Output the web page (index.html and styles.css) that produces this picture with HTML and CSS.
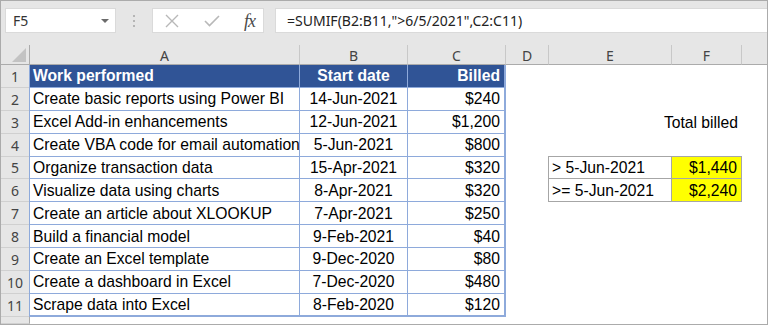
FILE: index.html
```html
<!DOCTYPE html>
<html>
<head>
<meta charset="utf-8">
<link rel="stylesheet" href="styles.css">
</head>
<body>
<div class="app">
  <div class="fbar">
    <div class="namebox">
      <span class="nb-text">F5</span>
      <svg class="nb-arrow" width="8" height="4" viewBox="0 0 8 4"><path d="M0 0 L8 0 L4 4 Z" fill="#6b6b6b"/></svg>
    </div>
    <div class="dots"><i></i><i></i><i></i></div>
    <div class="fxbox">
      <svg class="ic-x" width="14" height="14" viewBox="0 0 14 14"><path d="M1 1 L13 13 M13 1 L1 13" stroke="#b8b8b8" stroke-width="1.4" fill="none"/></svg>
      <svg class="ic-check" width="16" height="12" viewBox="0 0 16 12"><path d="M1 6 L5.5 10.5 L15 1" stroke="#b8b8b8" stroke-width="1.6" fill="none"/></svg>
      <span class="ic-fx">fx</span>
    </div>
    <div class="formula">=SUMIF(B2:B11,"&gt;6/5/2021",C2:C11)</div>
  </div>
  <div class="sheet">
    <div class="corner"><svg width="14" height="14" viewBox="0 0 14 14"><path d="M14 0 L14 14 L0 14 Z" fill="#c3c3c3"/></svg></div>
    <div class="ch">A</div><div class="ch">B</div><div class="ch">C</div><div class="ch">D</div><div class="ch">E</div><div class="ch">F</div><div class="ch last"></div>

    <div class="rh">1</div><div class="c t th l">Work performed</div><div class="c t th m">Start date</div><div class="c t th r tr">Billed</div><div class="c"></div><div class="c"></div><div class="c"></div><div class="c"></div>
    <div class="rh">2</div><div class="c t l">Create basic reports using Power BI</div><div class="c t m">14-Jun-2021</div><div class="c t r tr">$240</div><div class="c"></div><div class="c"></div><div class="c"></div><div class="c"></div>
    <div class="rh">3</div><div class="c t l">Excel Add-in enhancements</div><div class="c t m">12-Jun-2021</div><div class="c t r tr">$1,200</div><div class="c"></div><div class="c"></div><div class="c r over">Total billed</div><div class="c"></div>
    <div class="rh">4</div><div class="c t l">Create VBA code for email automation</div><div class="c t m">5-Jun-2021</div><div class="c t r tr">$800</div><div class="c"></div><div class="c"></div><div class="c"></div><div class="c"></div>
    <div class="rh">5</div><div class="c t l">Organize transaction data</div><div class="c t m">15-Apr-2021</div><div class="c t r tr">$320</div><div class="c"></div><div class="c s l stop">&gt; 5-Jun-2021</div><div class="c s r y stop">$1,440</div><div class="c"></div>
    <div class="rh">6</div><div class="c t l">Visualize data using charts</div><div class="c t m">8-Apr-2021</div><div class="c t r tr">$320</div><div class="c"></div><div class="c s l">&gt;= 5-Jun-2021</div><div class="c s r y">$2,240</div><div class="c"></div>
    <div class="rh">7</div><div class="c t l">Create an article about XLOOKUP</div><div class="c t m">7-Apr-2021</div><div class="c t r tr">$250</div><div class="c"></div><div class="c"></div><div class="c"></div><div class="c"></div>
    <div class="rh">8</div><div class="c t l">Build a financial model</div><div class="c t m">9-Feb-2021</div><div class="c t r tr">$40</div><div class="c"></div><div class="c"></div><div class="c"></div><div class="c"></div>
    <div class="rh">9</div><div class="c t l">Create an Excel template</div><div class="c t m">9-Dec-2020</div><div class="c t r tr">$80</div><div class="c"></div><div class="c"></div><div class="c"></div><div class="c"></div>
    <div class="rh">10</div><div class="c t l">Create a dashboard in Excel</div><div class="c t m">7-Dec-2020</div><div class="c t r tr">$480</div><div class="c"></div><div class="c"></div><div class="c"></div><div class="c"></div>
    <div class="rh">11</div><div class="c t l tb">Scrape data into Excel</div><div class="c t m tb">8-Feb-2020</div><div class="c t r tr tb">$120</div><div class="c"></div><div class="c"></div><div class="c"></div><div class="c"></div>
    <div class="rh"></div><div class="c"></div><div class="c"></div><div class="c"></div><div class="c"></div><div class="c"></div><div class="c"></div><div class="c"></div>
  </div>
</div>
</body>
</html>
```

FILE: styles.css
```css
* { box-sizing: border-box; }
html, body { margin: 0; padding: 0; background: #fff; }
.app {
  width: 768px;
  height: 325px;
  border: 1px solid #ababab;
  overflow: hidden;
  background: #fff;
  display: flex;
  flex-direction: column;
}
.fbar {
  height: 44px;
  flex: none;
  background: #e6e6e6;
  display: flex;
  align-items: flex-start;
  padding-top: 7px;
  padding-left: 4px;
}
.namebox {
  width: 111px;
  height: 25px;
  background: #fff;
  border: 1px solid #dadada;
  display: flex;
  align-items: center;
  justify-content: space-between;
  padding: 0 6px 0 7px;
  font-family: "Noto Sans", sans-serif;
  font-size: 14px;
  color: #333;
}
.nb-arrow { margin-top: 1px; }
.dots {
  width: 36px;
  height: 25px;
  display: flex;
  flex-direction: column;
  align-items: center;
  justify-content: center;
  gap: 3px;
}
.dots i { display: block; width: 2px; height: 2px; background: #b5b5b5; }
.fxbox {
  width: 112px;
  height: 25px;
  background: #fff;
  border: 1px solid #dadada;
  display: flex;
  align-items: center;
  padding-left: 12px;
}
.ic-x { margin-right: 25px; }
.ic-check { margin-right: 24px; margin-top: 1px; }
.ic-fx {
  font-family: "Liberation Serif", serif;
  font-style: italic;
  font-size: 18px;
  color: #4a4a4a;
  letter-spacing: -1px;
  line-height: 1;
}
.formula {
  flex: 1;
  margin-left: 11px;
  height: 25px;
  background: #fff;
  border: 1px solid #dadada;
  border-right: none;
  padding-left: 11px;
  font-family: "Noto Sans", sans-serif;
  font-size: 14px;
  color: #222;
  display: flex;
  align-items: center;
}
.sheet {
  flex: 1;
  display: grid;
  grid-template-columns: 29px 270px 108px 98px 43px 123px 70px 1fr;
  grid-template-rows: 20px repeat(11, 22.88px) 1fr;
}
.corner {
  background: #e6e6e6;
  border-bottom: 1px solid #ababab;
  border-right: 1px solid #ababab;
  display: flex;
  align-items: flex-end;
  justify-content: flex-end;
  padding: 0 3px 2px 0;
}
.ch {
  background: #e6e6e6;
  border-bottom: 1px solid #ababab;
  border-right: 1px solid #c8c8c8;
  display: flex;
  align-items: center;
  justify-content: center;
  font-family: "Noto Sans", sans-serif;
  font-size: 14px;
  color: #444;
  padding-top: 1px;
}
.ch.last { border-right: none; }
.rh {
  background: #e6e6e6;
  border-bottom: 1px solid #d0d0d0;
  border-right: 1px solid #ababab;
  display: flex;
  align-items: center;
  justify-content: center;
  font-family: "Noto Sans", sans-serif;
  font-size: 14px;
  color: #444;
  padding-top: 1px;
}
.c {
  font-family: "Liberation Sans", Arial, sans-serif;
  font-size: 15.7px;
  color: #000;
  display: flex;
  align-items: center;
  white-space: nowrap;
  min-width: 0;
  padding: 1px 3px 0 3px;
}
.t {
  border-right: 1px solid #8eaadb;
  border-bottom: 1px solid #8eaadb;
  overflow: hidden;
}
.t.l { border-left: 1px solid #8eaadb; margin-left: -1px; }
.t.tr { border-right: 2px solid #8eaadb; }
.t.tb { border-bottom: 2px solid #8eaadb; }
.th {
  background: #305496;
  color: #fff;
  font-weight: bold;
}
.l { justify-content: flex-start; }
.m { justify-content: center; }
.r { justify-content: flex-end; padding-right: 4px; }
.over { overflow: visible; }
.s {
  border-right: 1px solid #a6a6a6;
  border-bottom: 1px solid #a6a6a6;
}
.s.l { border-left: 1px solid #a6a6a6; margin-left: -1px; }
.stop { border-top: 1px solid #a6a6a6; margin-top: -1px; }
.y { background: #ffff00; }
```
